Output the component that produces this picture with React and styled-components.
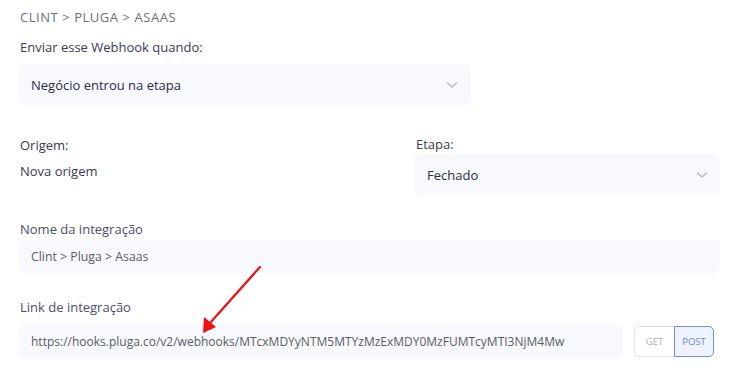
import React from "react";
import styled, { createGlobalStyle } from "styled-components";

const Global = createGlobalStyle`
  html, body { margin: 0; padding: 0; background: #fff; }
  body { font-family: "Open Sans", "Noto Sans", sans-serif; }
  * { box-sizing: border-box; }
`;

const Page = styled.div`
  position: relative;
  width: 739px;
  height: 373px;
  padding: 8px 19px 0 19px;
  display: flex;
  flex-direction: column;
`;

const Crumb = styled.div`
  font-size: 13px;
  color: #6e6e80;
  letter-spacing: 0.55px;
  height: 18px;
  line-height: 18px;
  padding-left: 1px;
`;

const Label = styled.div`
  font-size: 13px;
  color: ${p => p.$muted ? "#4d4d6b" : "#3b3b52"};
  line-height: 18px;
  height: 18px;
  padding-left: 1px;
  margin-top: ${p => p.$mt || 0}px;
`;

const Select = styled.div`
  width: ${p => p.$w};
  height: 41px;
  margin-top: ${p => p.$mt || 0}px;
  background: #f7f9fe;
  border-radius: 5px;
  display: flex;
  align-items: center;
  justify-content: space-between;
  padding: 0 12px 0 12px;
  font-size: 13px;
  font-weight: 500;
  color: #2a2a4a;
`;

const Chevron = () => (
  <svg width="12" height="8" viewBox="0 0 12 8">
    <path d="M1.5 2 L6 6 L10.5 2" fill="none" stroke="#b9bcc6" strokeWidth="1.6" strokeLinecap="round" strokeLinejoin="round" />
  </svg>
);

const Row = styled.div`
  display: flex;
  margin-top: 25px;
`;

const Col = styled.div`
  display: flex;
  flex-direction: column;
  width: ${p => p.$w};
`;

const Value = styled.div`
  font-size: 13px;
  color: #3b3b52;
  line-height: 18px;
  margin-top: 8px;
  padding-left: 1px;
`;

const Input = styled.div`
  height: ${p => p.$h}px;
  flex: ${p => p.$flex ? 1 : "none"};
  margin-top: ${p => p.$mt || 0}px;
  background: #f7f9fe;
  border-radius: 5px;
  display: flex;
  align-items: center;
  padding-left: 12px;
  font-size: ${p => p.$fs || 12}px;
  color: #5b5b66;
  white-space: nowrap;
`;

const LinkRow = styled.div`
  display: flex;
  align-items: center;
  margin-top: 8px;
  gap: 12px;
`;

const BtnGroup = styled.div`
  display: flex;
  height: 31px;
  margin-right: 6px;
`;

const MethodBtn = styled.div`
  width: 40px;
  height: 31px;
  display: flex;
  align-items: center;
  justify-content: center;
  font-size: 9.5px;
  font-weight: 500;
  color: ${p => p.$active ? "#6a87ea" : "#b0b0b0"};
  background: ${p => p.$active ? "#eff3fe" : "#fff"};
  border: 1px solid ${p => p.$active ? "#6f8ef0" : "#e2e2e6"};
  border-radius: ${p => p.$active ? "0 5px 5px 0" : "5px 0 0 5px"};
  ${p => !p.$active && "border-right: none;"}
`;

const Arrow = styled.svg`
  position: absolute;
  left: 0;
  top: 0;
  pointer-events: none;
`;

export default function App() {
  return (
    <>
      <Global />
      <Page>
        <Crumb>CLINT &gt; PLUGA &gt; ASAAS</Crumb>
        <Label $mt={12}>Enviar esse Webhook quando:</Label>
        <Select $w="451px" $mt={8}>
          <span>Negócio entrou na etapa</span>
          <Chevron />
        </Select>
        <Row>
          <Col $w="396px">
            <Label $mt={6}>Origem:</Label>
            <Value>Nova origem</Value>
          </Col>
          <Col $w="305px">
            <Label $mt={5}>Etapa:</Label>
            <Select $w="305px" $mt={1}>
              <span>Fechado</span>
              <Chevron />
            </Select>
          </Col>
        </Row>
        <Label $muted $mt={25}>Nome da integração</Label>
        <Input $h={33} $mt={2} $fs={12.3}>Clint &gt; Pluga &gt; Asaas</Input>
        <Label $muted $mt={25}>Link de integração</Label>
        <LinkRow>
          <Input $h={35} $flex $fs={12}>https://hooks.pluga.co/v2/webhooks/MTcxMDYyNTM5MTYzMzExMDY0MzFUMTcyMTI3NjM4Mw</Input>
          <BtnGroup>
            <MethodBtn>GET</MethodBtn>
            <MethodBtn $active>POST</MethodBtn>
          </BtnGroup>
        </LinkRow>
        <Arrow width="739" height="373" viewBox="0 0 739 373">
          <line x1="260" y1="267" x2="210" y2="323" stroke="#ee1111" strokeWidth="2.2" strokeLinecap="round" />
          <polygon points="203,333 204,317 216,327" fill="#ee1111" />
        </Arrow>
      </Page>
    </>
  );
}
